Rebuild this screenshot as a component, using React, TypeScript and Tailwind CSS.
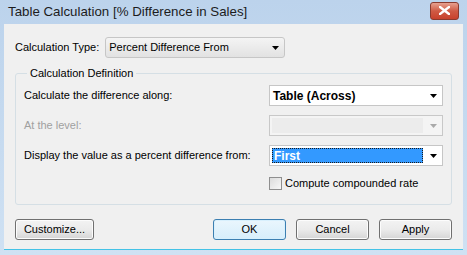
import React from "react";

const font = { fontFamily: '"Liberation Sans", Arial, sans-serif' };

function Arrow({ disabled }: { disabled?: boolean }) {
  return (
    <svg width="7" height="4" viewBox="0 0 7 4" className="shrink-0">
      <path d="M0 0h7L3.5 4z" fill={disabled ? "#a9a9a9" : "#000"} />
    </svg>
  );
}

function Combo({
  value,
  bold,
  disabled,
  selected,
  className,
}: {
  value?: string;
  bold?: boolean;
  disabled?: boolean;
  selected?: boolean;
  className?: string;
}) {
  return (
    <div
      className={
        "flex h-[21px] shrink-0 items-center border " +
        (disabled ? "border-[#c8c8c8] bg-[#f4f4f4] " : "border-[#c6c6c6] bg-white ") +
        (className ?? "")
      }
    >
      <div className="flex h-full flex-1 items-center p-[2px]">
        <div
          className={
            "flex h-full flex-1 items-center whitespace-nowrap px-[1px] " +
            (selected ? "border border-dotted border-[#1a1a1a] bg-[#3399ff] text-white " : "") +
            (disabled ? "bg-[#ececec] " : "") +
            (bold ? "font-bold text-[12px]" : "text-[11px]")
          }
        >
          {value}
        </div>
      </div>
      <div className="flex w-[17px] justify-center">
        <Arrow disabled={disabled} />
      </div>
    </div>
  );
}

function Button({ label, primary, className }: { label: string; primary?: boolean; className?: string }) {
  return (
    <div
      className={
        "flex h-[21px] items-center justify-center rounded-[3px] border text-[11px] " +
        (primary
          ? "border-[#3c7fb1] bg-gradient-to-b from-[#eaf6fd] to-[#d7eefb] shadow-[inset_0_0_0_1px_#d8f0fd] "
          : "border-[#707070] bg-gradient-to-b from-[#f3f3f3] via-[#ebebeb] to-[#d5d5d5] shadow-[inset_0_0_0_1px_#fcfcfc] ") +
        (className ?? "")
      }
    >
      {label}
    </div>
  );
}

export default function App() {
  return (
    <div
      className="flex h-[255px] w-[467px] flex-col overflow-hidden bg-gradient-to-b from-[#bcd3ec] to-[#cfe1f3] text-[#000]"
      style={font}
    >
      {/* Title bar */}
      <div className="flex h-[24px] shrink-0 items-center justify-between pl-[8px] pr-[8px]">
        <span className="text-[13.3px] text-[#1c1c1c]">Table Calculation [% Difference in Sales]</span>
        <div className="mt-[-3px] flex h-[18px] w-[29px] items-center justify-center rounded-[3px] border border-[#8a3b2f] bg-gradient-to-b from-[#e6a08f] via-[#cf5a44] to-[#c8412c]">
          <svg width="11" height="9" viewBox="0 0 11 9">
            <path d="M1 1l9 7M10 1L1 8" stroke="#fff" strokeWidth="2.4" strokeLinecap="square" />
          </svg>
        </div>
      </div>

      {/* Client area */}
      <div className="mx-[4px] mb-[5px] flex flex-1 flex-col border-b border-[#44c2e6] bg-[#f0f0f0] px-[11px] pt-[13px]">
        <div className="flex items-center gap-[6px]">
          <span className="whitespace-nowrap text-[11px]">Calculation Type:</span>
          <Combo value="Percent Difference From" className="w-[180px] rounded-[3px] border-[#707070] bg-gradient-to-b from-[#f4f4f4] to-[#e2e2e2]" />
        </div>

        <fieldset className="mt-[8px] rounded-[3px] border border-[#d5dfe5] pb-[12px] pl-[8px] pr-[8px] pt-[5px]">
          <legend className="ml-[3px] px-[3px] text-[11px] leading-[14px]">Calculation Definition</legend>
          <div className="flex flex-col gap-[9px]">
            <div className="flex items-center justify-between">
              <span className="whitespace-nowrap text-[11px]">Calculate the difference along:</span>
              <Combo value="Table (Across)" bold className="w-[174px]" />
            </div>
            <div className="flex items-center justify-between">
              <span className="whitespace-nowrap text-[11px] text-[#a0a0a0]">At the level:</span>
              <Combo disabled className="w-[174px]" />
            </div>
            <div className="flex items-center justify-between">
              <span className="whitespace-nowrap text-[11px]">Display the value as a percent difference from:</span>
              <Combo value="First" bold selected className="w-[174px]" />
            </div>
            <div className="flex items-center justify-end">
              <div className="flex w-[174px] items-center gap-[3px]">
                <div className="h-[13px] w-[13px] border border-[#8f8f8f] bg-gradient-to-br from-[#dcdcdc] to-[#f8f8f8]" />
                <span className="whitespace-nowrap text-[11px]">Compute compounded rate</span>
              </div>
            </div>
          </div>
        </fieldset>

        <div className="mt-[14px] flex items-center">
          <Button label="Customize..." className="w-[79px]" />
          <div className="flex-1" />
          <div className="flex gap-[10px]">
            <Button label="OK" primary className="w-[73px]" />
            <Button label="Cancel" className="w-[73px]" />
            <Button label="Apply" className="w-[73px]" />
          </div>
        </div>
      </div>
    </div>
  );
}
